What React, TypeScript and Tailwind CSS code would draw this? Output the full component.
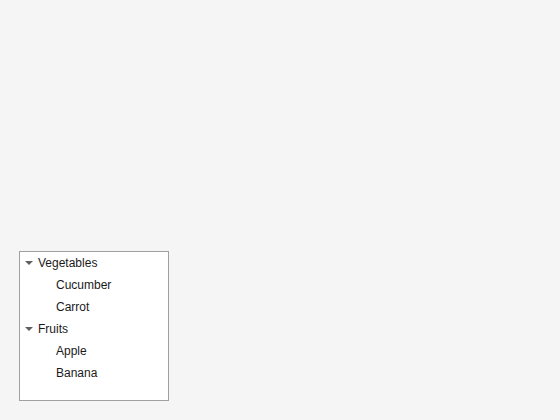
const tree = [
  { label: 'Vegetables', children: ['Cucumber', 'Carrot'] },
  { label: 'Fruits', children: ['Apple', 'Banana'] },
];

function Caret() {
  return (
    <svg width="8" height="4" viewBox="0 0 8 4" className="shrink-0" aria-hidden="true">
      <path d="M0 0h8L4 4z" fill="#606060" />
    </svg>
  );
}

export default function App() {
  return (
    <div className="min-h-[420px] bg-[#f5f5f5] flex items-end px-[19px] pb-[19px] font-['Liberation_Sans',Arial,sans-serif] text-[12px] text-[#1a1a1a]">
      <div className="w-[150px] h-[150px] bg-white border border-[#a0a0a0]">
        {tree.map((node) => (
          <div key={node.label}>
            <div className="h-[22px] flex items-center pl-[5px] gap-[5px]">
              <Caret />
              <span>{node.label}</span>
            </div>
            {node.children.map((child) => (
              <div key={child} className="h-[22px] flex items-center pl-[36px]">
                {child}
              </div>
            ))}
          </div>
        ))}
      </div>
    </div>
  );
}
